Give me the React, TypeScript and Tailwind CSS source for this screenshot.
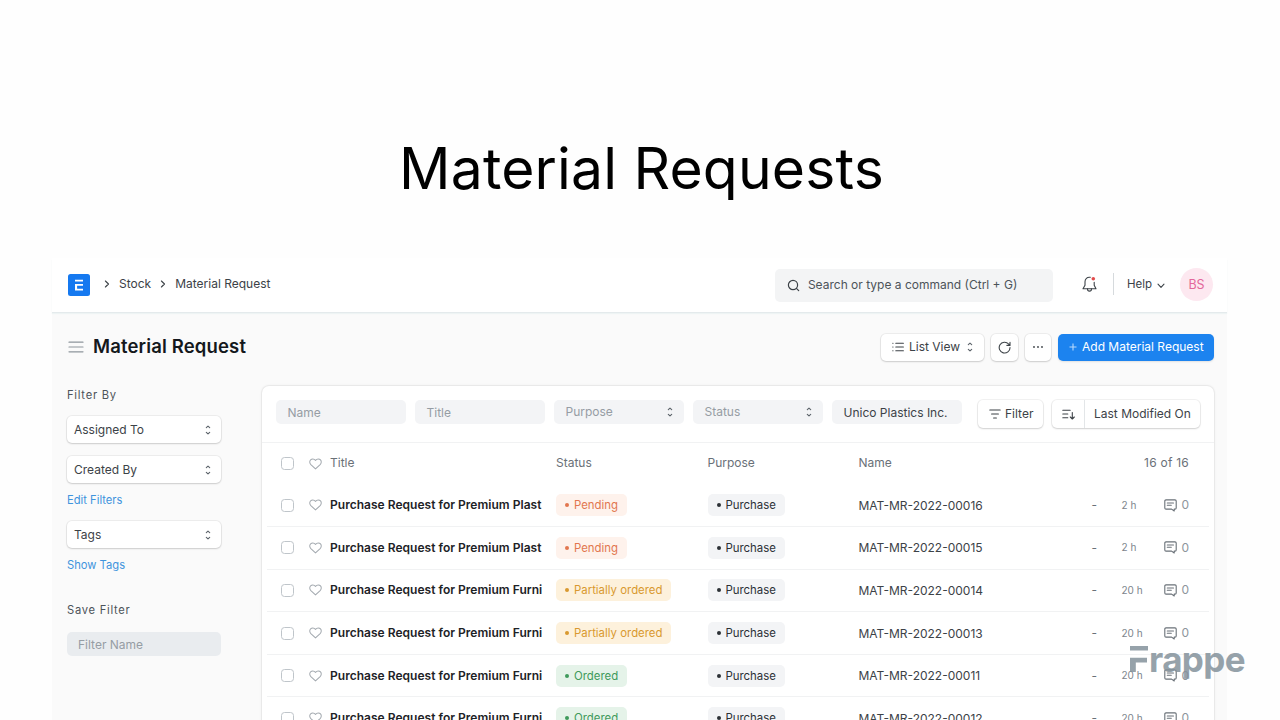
import { clsx } from 'clsx';

type Status = 'Pending' | 'Partially ordered' | 'Ordered';

interface MaterialRequest {
  title: string;
  status: Status;
  name: string;
  age: string;
}

const requests: MaterialRequest[] = [
  { title: 'Purchase Request for Premium Plast', status: 'Pending', name: 'MAT-MR-2022-00016', age: '2 h' },
  { title: 'Purchase Request for Premium Plast', status: 'Pending', name: 'MAT-MR-2022-00015', age: '2 h' },
  { title: 'Purchase Request for Premium Furni', status: 'Partially ordered', name: 'MAT-MR-2022-00014', age: '20 h' },
  { title: 'Purchase Request for Premium Furni', status: 'Partially ordered', name: 'MAT-MR-2022-00013', age: '20 h' },
  { title: 'Purchase Request for Premium Furni', status: 'Ordered', name: 'MAT-MR-2022-00011', age: '20 h' },
  { title: 'Purchase Request for Premium Furni', status: 'Ordered', name: 'MAT-MR-2022-00012', age: '20 h' },
];

const statusStyles: Record<Status, string> = {
  Pending: 'bg-[#fef2ec] text-[#e2764f]',
  'Partially ordered': 'bg-[#fdf1dc] text-[#d9992f]',
  Ordered: 'bg-[#e5f3e9] text-[#3f9a5b]',
};

const SelectIcon = ({ className }: { className?: string }) => (
  <svg className={clsx('shrink-0', className)} width="6" height="10" viewBox="0 0 6 10" fill="none" stroke="#5b6269" strokeWidth="1.1" strokeLinecap="round" strokeLinejoin="round">
    <path d="M1.3 2.7 3 1.1l1.7 1.6M1.3 7.3 3 8.9l1.7-1.6" />
  </svg>
);

const ChevronIcon = () => (
  <svg className="shrink-0" width="6" height="8" viewBox="0 0 6 8" fill="none" stroke="#3c4247" strokeWidth="1.1" strokeLinecap="round" strokeLinejoin="round">
    <path d="M1.4 1 4.5 4 1.4 7" />
  </svg>
);

const HeartIcon = () => (
  <svg className="shrink-0" width="13" height="12" viewBox="0 0 14 12" fill="none" stroke="#a3a9af" strokeWidth="1.1" strokeLinejoin="round">
    <path d="M7 2.1C6.2 1 5.1.6 4.1.6 2.2.6.8 2 .8 3.9c0 1.1.5 2 1.2 2.7L7 11.3l5-4.7c.7-.7 1.2-1.6 1.2-2.7C13.2 2 11.8.6 9.9.6 8.9.6 7.8 1 7 2.1z" />
  </svg>
);

const CommentIcon = () => (
  <svg className="shrink-0" width="13" height="13" viewBox="0 0 13 13" fill="none" stroke="#6a7178" strokeWidth="1.1" strokeLinecap="round" strokeLinejoin="round">
    <path d="M2 .9h9c.7 0 1.2.5 1.2 1.2v6.8c0 .7-.5 1.2-1.2 1.2h-.8v1.9l-2.600-1.9H2C1.300 10.100.8 9.600.8 8.900V2.100C.8 1.400 1.300.9 2 .9z" />
    <path d="M3.300 4h6.200M3.300 6.300h4" />
  </svg>
);

const Checkbox = () => <span className="size-[13px] shrink-0 rounded-[3.5px] border border-[#bfc5ca] bg-white" />;

const Breadcrumbs = () => (
  <div className="-mt-[2px] flex items-center text-[12px] text-[#3c4247]">
    <svg className="mr-[14px] mt-[2px]" width="22" height="22" viewBox="0 0 22 22">
      <rect width="22" height="22" rx="2.5" fill="#1579f0" />
      <path d="M7 5.7h8v1.8H7zM7 9.900h8v1.800H9.100v3H15v1.800H7z" fill="#fff" />
    </svg>
    <ChevronIcon />
    <span className="-mt-px ml-[9px] mr-[9px]">Stock</span>
    <ChevronIcon />
    <span className="-mt-px ml-[9px]">Material Request</span>
  </div>
);

const Navbar = () => (
  <header className="flex h-[54px] shrink-0 items-center bg-white pl-[16px] pr-[14px] shadow-[0_1px_0_#e4eaec,0_2px_1px_#eef4f4]">
    <Breadcrumbs />
    <div className="ml-auto flex h-[33px] w-[278px] items-center rounded-[5px] bg-[#f3f4f5] pl-[12px] text-[12px] text-[#4c5359]">
      <svg className="mr-[8px]" width="13" height="13" viewBox="0 0 13 13" fill="none" stroke="#3c4247" strokeWidth="1.2" strokeLinecap="round">
        <circle cx="6" cy="6" r="4.6" />
        <path d="m9.400 9.400 2.300 2.300" />
      </svg>
      Search or type a command (Ctrl + G)
    </div>
    <svg className="-mt-[2px] ml-[29px]" width="15" height="16" viewBox="0 0 15 16" fill="none" stroke="#3c4247" strokeWidth="1.1" strokeLinecap="round" strokeLinejoin="round">
      <path d="M8.300 1.300C5 .8 3 3 3 5.800v3.400L1 12.700h13L12.200 9.200V6.200" />
      <path d="M5.500 12.900c0 1.300.9 2.200 2 2.200s2-.9 2-2.200" />
      <circle cx="11.3" cy="2.8" r="1.8" fill="#e24c4c" stroke="none" />
    </svg>
    <span className="-mt-[2px] ml-[16px] h-[22px] w-px bg-[#d6dadd]" />
    <span className="ml-[13px] text-[11.5px] text-[#3c4247]">Help</span>
    <svg className="ml-[5px] mt-[2px]" width="8" height="6" viewBox="0 0 8 6" fill="none" stroke="#3c4247" strokeWidth="1.1" strokeLinecap="round" strokeLinejoin="round">
      <path d="M1 1.200 4 4.300l3-3.100" />
    </svg>
    <span className="-mt-px ml-[15px] flex size-[33px] items-center justify-center rounded-full bg-[#fde8f0] pt-px text-[12.5px] text-[#e3679b]">BS</span>
  </header>
);

const buttonStyle = 'flex h-[27px] items-center whitespace-nowrap rounded-[5px] bg-white text-[12px] text-[#3c4247] shadow-[0_0_0_1px_rgba(0,0,0,0.05),0_1px_2px_rgba(0,0,0,0.14)]';

const PageHead = () => (
  <div className="flex h-[74px] items-center pb-[4px] pl-[16px] pr-[13px]">
    <svg width="16" height="12" viewBox="0 0 16 12" stroke="#8d959c" strokeWidth="1.2" strokeLinecap="round">
      <path d="M1 1.200h14M1 6h14M1 10.800h14" />
    </svg>
    <h2 className="-mt-px ml-[9px] text-[18.5px] font-semibold tracking-[0.008em] text-[#14181c]">Material Request</h2>
    <div className={clsx(buttonStyle, 'ml-auto w-[103px] pl-[11px]')}>
      <svg width="12" height="10" viewBox="0 0 12 10" stroke="#3c4247" strokeWidth="1.1" strokeLinecap="round">
        <path d="M3.800 1.200h7.600M3.800 5h7.600M3.800 8.800h7.600M.8 1.200h.2M.8 5h.2M.8 8.800h.2" />
      </svg>
      <span className="ml-[5px]">List View</span>
      <SelectIcon className="ml-[7px]" />
    </div>
    <div className={clsx(buttonStyle, 'ml-[7px] w-[27px] justify-center')}>
      <svg width="13" height="13" viewBox="0 0 13 13" fill="none" stroke="#3c4247" strokeWidth="1.1" strokeLinecap="round" strokeLinejoin="round">
        <path d="M12 6.500A5.400 5.400 0 1 1 10.600 3L12 4.300M12 1.200v3.200H8.900" />
      </svg>
    </div>
    <div className={clsx(buttonStyle, 'ml-[7px] w-[26px] justify-center')}>
      <svg width="10" height="2" viewBox="0 0 10 2" fill="#3c4247">
        <circle cx="1" cy="1" r="0.9" />
        <circle cx="5" cy="1" r="0.9" />
        <circle cx="9" cy="1" r="0.9" />
      </svg>
    </div>
    <div className="ml-[7px] flex h-[27px] w-[156px] items-center whitespace-nowrap rounded-[5px] bg-[#1c83ef] pl-[11px] text-[12px] text-white shadow-[0_1px_2px_rgba(0,0,0,0.1)]">
      <svg className="mr-[5px]" width="8" height="8" viewBox="0 0 8 8" stroke="#b9dafb" strokeWidth="1.1">
        <path d="M4 .5v7M.5 4h7" />
      </svg>
      Add Material Request
    </div>
  </div>
);

const SideSelect = ({ label, className }: { label: string; className?: string }) => (
  <div className={clsx(buttonStyle, 'w-[154px] justify-between pl-[7px] pr-[10px]', className)}>
    {label}
    <SelectIcon />
  </div>
);

const Sidebar = () => (
  <aside className="flex w-[210px] shrink-0 flex-col pl-[15px] text-[11.2px]">
    <span className="mt-px h-[16px] text-[11.2px] leading-[16px] tracking-[0.065em] text-[#4c5359]">Filter By</span>
    <SideSelect label="Assigned To" className="mt-[13px]" />
    <SideSelect label="Created By" className="mt-[13px]" />
    <a className="mt-[9px] h-[16px] leading-[16px] text-[#3f94dd]">Edit Filters</a>
    <SideSelect label="Tags" className="mt-[13px]" />
    <a className="mt-[9px] h-[16px] leading-[16px] text-[#3f94dd]">Show Tags</a>
    <span className="mt-[29px] h-[16px] text-[11.2px] leading-[16px] tracking-[0.065em] text-[#4c5359]">Save Filter</span>
    <div className="mt-[14px] flex h-[24px] w-[154px] items-center rounded-[5px] bg-[#e9ecef] pl-[11px] pt-px text-[12px] text-[#969da4]">Filter Name</div>
  </aside>
);

const FilterField = ({ label, select, filled }: { label: string; select?: boolean; filled?: boolean }) => (
  <div
    className={clsx(
      'flex h-[24px] w-[130px] items-center justify-between whitespace-nowrap rounded-[5px] bg-[#f3f4f6] pl-[11.5px] pr-[11px] text-[12px]',
      filled ? 'text-[#3c4247]' : 'text-[#969da4]',
      !select && 'pt-[2px]',
    )}
  >
    {label}
    {select && <SelectIcon />}
  </div>
);

const Toolbar = () => (
  <div className="flex h-[57px] items-start border-b border-[#f1f2f3] pl-[14px] pt-[14px]">
    <div className="flex gap-[9px]">
      <FilterField label="Name" />
      <FilterField label="Title" />
      <FilterField label="Purpose" select />
      <FilterField label="Status" select />
      <FilterField label="Unico Plastics Inc." filled />
    </div>
    <div className={clsx(buttonStyle, 'ml-[16px] h-[28px] w-[65px] pl-[11px]')}>
      <svg width="12" height="10" viewBox="0 0 12 10" stroke="#3c4247" strokeWidth="1.1" strokeLinecap="round">
        <path d="M.8 1h10.400M2.600 5h6.800M4.600 9h2.800" />
      </svg>
      <span className="ml-[4px]">Filter</span>
    </div>
    <div className={clsx(buttonStyle, 'ml-[9px] h-[28px] w-[148px]')}>
      <span className="flex h-full w-[33px] items-center justify-center border-r border-[#e3e6e8]">
        <svg width="13" height="11" viewBox="0 0 13 11" fill="none" stroke="#3c4247" strokeWidth="1.1" strokeLinecap="round" strokeLinejoin="round">
          <path d="M.8 1.200h7.400M.8 5h5M.8 8.800h5M10.300 3.500v6.400M8.300 8l2 2 2-2" />
        </svg>
      </span>
      <span className="ml-[9px]">Last Modified On</span>
    </div>
  </div>
);

const rowGrid = 'mx-[5px] grid shrink-0 grid-cols-[28px_21px_226px_151.5px_151px_233px_30px_28px_1fr] items-center pl-[14px] pr-[20px] text-[12px]';

const HeaderRow = () => (
  <div className={clsx(rowGrid, 'h-[41.5px] text-[#6a7178]')}>
    <Checkbox />
    <HeartIcon />
    <span className="-mt-px">Title</span>
    <span className="-mt-px">Status</span>
    <span className="-mt-px">Purpose</span>
    <span className="-mt-px">Name</span>
    <span className="col-span-3 -mt-px text-right tracking-[0.02em]">16 of 16</span>
  </div>
);

const Pill = ({ label, className }: { label: string; className: string }) => (
  <span className={clsx('inline-flex h-[22px] items-center rounded-[5px] px-[9px] text-[11.4px]', className)}>
    <span className="mr-[5px] size-[4px] rounded-full bg-current" />
    <span className="pt-px">{label}</span>
  </span>
);

const RequestRow = ({ request }: { request: MaterialRequest }) => (
  <div className={clsx(rowGrid, 'h-[42.6px] border-b border-[#f1f2f3] text-[#3c4247]')}>
    <Checkbox />
    <HeartIcon />
    <span className="whitespace-nowrap font-semibold tracking-[0.002em] text-[#1d2226]">{request.title}</span>
    <span className="flex"><Pill label={request.status} className={statusStyles[request.status]} /></span>
    <span className="flex"><Pill label="Purchase" className="bg-[#f3f4f6] text-[#2c3136]" /></span>
    <span className="pt-px">{request.name}</span>
    <span className="text-[#6a7178]">-</span>
    <span className="whitespace-nowrap text-[10px] text-[#7d858c]">{request.age}</span>
    <span className="flex items-center justify-end gap-[4px] text-[#8d959c]">
      <CommentIcon />
      0
    </span>
  </div>
);

const FrappeMark = () => (
  <div className="absolute left-[1130px] top-[640px] flex h-[44px] items-start text-[#84929c] opacity-85">
    <svg className="mt-[6px]" width="18" height="26" viewBox="0 0 18 26" fill="currentColor">
      <path d="M0 0h18v4.600H0zM0 11.800h17v4.700H5.800V26H0z" />
    </svg>
    <span className="-mt-px ml-px text-[35px] font-bold leading-[40px] tracking-[-0.018em]">rappe</span>
  </div>
);

const App = () => (
  <div className="relative flex h-[720px] w-[1280px] flex-col overflow-hidden bg-[#fefefe] font-['Inter',sans-serif]">
    <div className="flex h-[258px] shrink-0 justify-center pl-[3px] pt-[129px]">
      <h1 className="whitespace-nowrap text-[57px] leading-[80px] tracking-[0.003em] text-black">Material Requests</h1>
    </div>
    <div className="ml-[52px] flex w-[1175px] flex-1 flex-col bg-[#fafafa]">
      <Navbar />
      <PageHead />
      <div className="flex">
        <Sidebar />
        <main className="h-[360px] w-[952px] rounded-t-[7px] bg-white shadow-[0_0_0_1px_rgba(0,0,0,0.03),0_0_3px_rgba(0,0,0,0.1)]">
          <Toolbar />
          <HeaderRow />
          {requests.map((request) => (
            <RequestRow key={request.name} request={request} />
          ))}
        </main>
      </div>
    </div>
    <FrappeMark />
  </div>
);

export default App;
